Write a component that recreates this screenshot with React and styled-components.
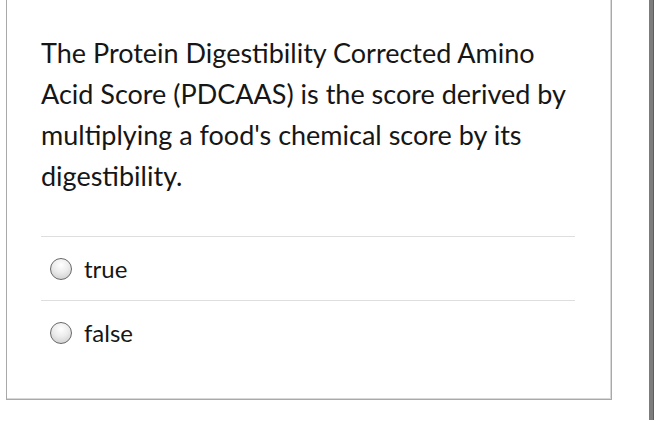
import React from "react";
import styled, { createGlobalStyle } from "styled-components";

const Global = createGlobalStyle`
  html, body {
    margin: 0;
    background: #fff;
  }
  body {
    font-family: Lato, "Open Sans", sans-serif;
    color: #161616;
  }
`;

const Page = styled.div`
  display: flex;
  align-items: flex-start;
  height: 421px;
  overflow: hidden;
`;

const Card = styled.div`
  box-sizing: border-box;
  width: 606px;
  margin-left: 6px;
  padding: 32px 36px 35px 34px;
  border: 1px solid #a9a9a9;
  border-top: none;
  box-shadow: inset -1px -1px 0 #d8d8d8;
`;

const Question = styled.p`
  margin: 0 0 40px;
  font-size: 27px;
  line-height: 41px;
  color: #161616;
`;

const Options = styled.div`
  display: flex;
  flex-direction: column;
`;

const Option = styled.label`
  display: flex;
  align-items: center;
  gap: 12px;
  height: 64px;
  padding-left: 9px;
  border-top: 1px solid #dedede;
  box-sizing: border-box;
  font-size: 24px;
  color: #161616;
`;

const Radio = styled.span`
  box-sizing: border-box;
  width: 22px;
  height: 22px;
  border-radius: 50%;
  border: 1.5px solid #6a6a6a;
  background: radial-gradient(circle at 50% 30%, #ffffff 0%, #ececec 45%, #c6c6c6 100%);
  flex-shrink: 0;
`;

const Rail = styled.div`
  width: 4px;
  height: 420px;
  margin-left: 37px;
  background: #7d7d7d;
  border-right: 1px solid #5e5e5e;
`;

const options = ["true", "false"];

export default function App() {
  return (
    <>
      <Global />
      <Page>
        <Card>
          <Question>
            The Protein Digestibility Corrected Amino Acid Score (PDCAAS) is
            the score derived by multiplying a food's chemical score by its
            digestibility.
          </Question>
          <Options>
            {options.map((o) => (
              <Option key={o}>
                <Radio />
                {o}
              </Option>
            ))}
          </Options>
        </Card>
        <Rail />
      </Page>
    </>
  );
}
